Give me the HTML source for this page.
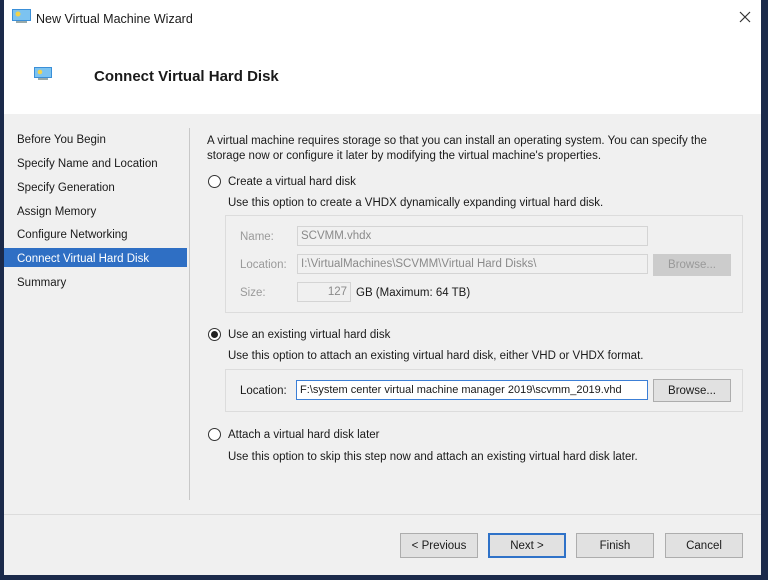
<!DOCTYPE html>
<html><head><style>
*{margin:0;padding:0;box-sizing:border-box}
body{width:768px;height:580px;overflow:hidden;background:#1b2a4a;font-family:"Liberation Sans",sans-serif;font-size:11.5px;color:#1a1a1a;position:relative}
.win{position:absolute;left:4px;top:0;width:757px;height:575px;background:#f0f0f0}
.top{position:absolute;left:0;top:0;width:757px;height:114px;background:#fff}
.a{position:absolute;white-space:nowrap;line-height:14px;margin-top:1px}
.g{color:#9a9a9a}
.inp{position:absolute;background:#f0f0f0;border:1px solid #d4d4d4;height:20px;line-height:18px;padding-left:3px;color:#8a8a8a;white-space:nowrap}
.btn{position:absolute;border:1px solid #adadad;background:#e1e1e1;text-align:center;line-height:24px;height:25px;width:78px}
.radio{position:absolute;width:13px;height:13px;border:1px solid #333;border-radius:50%;background:#fff}
.radio.on::after{content:"";position:absolute;left:2px;top:2px;width:7px;height:7px;border-radius:50%;background:#222}
.box{position:absolute;border:1px solid #dcdcdc}
</style></head><body>
<div class="win">
<div class="top"></div>
<svg style="position:absolute;left:8px;top:9px" width="19" height="15"><rect x="0" y="0" width="19" height="12" fill="#3a8fd8"/><rect x="1" y="1" width="17" height="10" fill="#7cc3f0"/><circle cx="6" cy="5" r="2.5" fill="#f3d34a"/><rect x="4" y="12" width="11" height="2" fill="#9aa"/></svg>
<div class="a" style="left:32px;top:11px;font-size:12.5px">New Virtual Machine Wizard</div>
<svg style="position:absolute;left:735px;top:11px" width="12" height="12"><path d="M1 1L11 11M11 1L1 11" stroke="#333" stroke-width="1.2"/></svg>
<svg style="position:absolute;left:30px;top:67px" width="18" height="14"><rect x="0" y="0" width="18" height="11" fill="#3a8fd8"/><rect x="1" y="1" width="16" height="9" fill="#7cc3f0"/><circle cx="6" cy="5" r="2.3" fill="#f3d34a"/><rect x="4" y="11" width="10" height="2" fill="#9aa"/></svg>
<div class="a" style="left:90px;top:67px;font-size:15px;font-weight:bold;line-height:18px">Connect Virtual Hard Disk</div>

<div class="a" style="left:13px;top:132px">Before You Begin</div>
<div class="a" style="left:13px;top:156px">Specify Name and Location</div>
<div class="a" style="left:13px;top:180px">Specify Generation</div>
<div class="a" style="left:13px;top:204px">Assign Memory</div>
<div class="a" style="left:13px;top:227px">Configure Networking</div>
<div style="position:absolute;left:0;top:248px;width:183px;height:19px;background:#2f6fc4"></div>
<div class="a" style="left:13px;top:251px;color:#fff">Connect Virtual Hard Disk</div>
<div class="a" style="left:13px;top:275px">Summary</div>
<div style="position:absolute;left:185px;top:128px;width:1px;height:372px;background:#c8c8c8"></div>

<div class="a" style="left:203px;top:133px">A virtual machine requires storage so that you can install an operating system. You can specify the</div>
<div class="a" style="left:203px;top:148px">storage now or configure it later by modifying the virtual machine's properties.</div>
<div class="radio" style="left:204px;top:175px"></div>
<div class="a" style="left:224px;top:174px">Create a virtual hard disk</div>
<div class="a" style="left:224px;top:195px">Use this option to create a VHDX dynamically expanding virtual hard disk.</div>
<div class="box" style="left:221px;top:215px;width:518px;height:98px"></div>
<div class="a g" style="left:236px;top:229px">Name:</div>
<div class="inp" style="left:293px;top:226px;width:351px">SCVMM.vhdx</div>
<div class="a g" style="left:236px;top:257px">Location:</div>
<div class="inp" style="left:293px;top:254px;width:351px">I:\VirtualMachines\SCVMM\Virtual Hard Disks\</div>
<div class="btn" style="left:649px;top:254px;background:#ccc;border-color:#ccc;color:#999;height:22px;line-height:21px">Browse...</div>
<div class="a g" style="left:236px;top:285px">Size:</div>
<div class="inp" style="left:293px;top:282px;width:54px;text-align:right;padding-right:3px">127</div>
<div class="a" style="left:352px;top:285px">GB (Maximum: 64 TB)</div>

<div class="radio on" style="left:204px;top:328px"></div>
<div class="a" style="left:224px;top:327px">Use an existing virtual hard disk</div>
<div class="a" style="left:224px;top:348px">Use this option to attach an existing virtual hard disk, either VHD or VHDX format.</div>
<div class="box" style="left:221px;top:369px;width:518px;height:43px"></div>
<div class="a" style="left:236px;top:383px">Location:</div>
<div class="inp" style="left:292px;top:380px;width:352px;background:#fff;border-color:#3c7fd6;color:#1a1a1a;font-size:11px;line-height:19px">F:\system center virtual machine manager 2019\scvmm_2019.vhd</div>
<div class="btn" style="left:649px;top:379px;height:23px;line-height:22px">Browse...</div>

<div class="radio" style="left:204px;top:428px"></div>
<div class="a" style="left:224px;top:427px">Attach a virtual hard disk later</div>
<div class="a" style="left:224px;top:449px">Use this option to skip this step now and attach an existing virtual hard disk later.</div>

<div style="position:absolute;left:0;top:514px;width:757px;height:1px;background:#dcdcdc"></div>
<div class="btn" style="left:396px;top:533px">&lt; Previous</div>
<div class="btn" style="left:484px;top:533px;border:2px solid #2f72c8;line-height:22px">Next &gt;</div>
<div class="btn" style="left:572px;top:533px">Finish</div>
<div class="btn" style="left:661px;top:533px">Cancel</div>
</div>
</body></html>
